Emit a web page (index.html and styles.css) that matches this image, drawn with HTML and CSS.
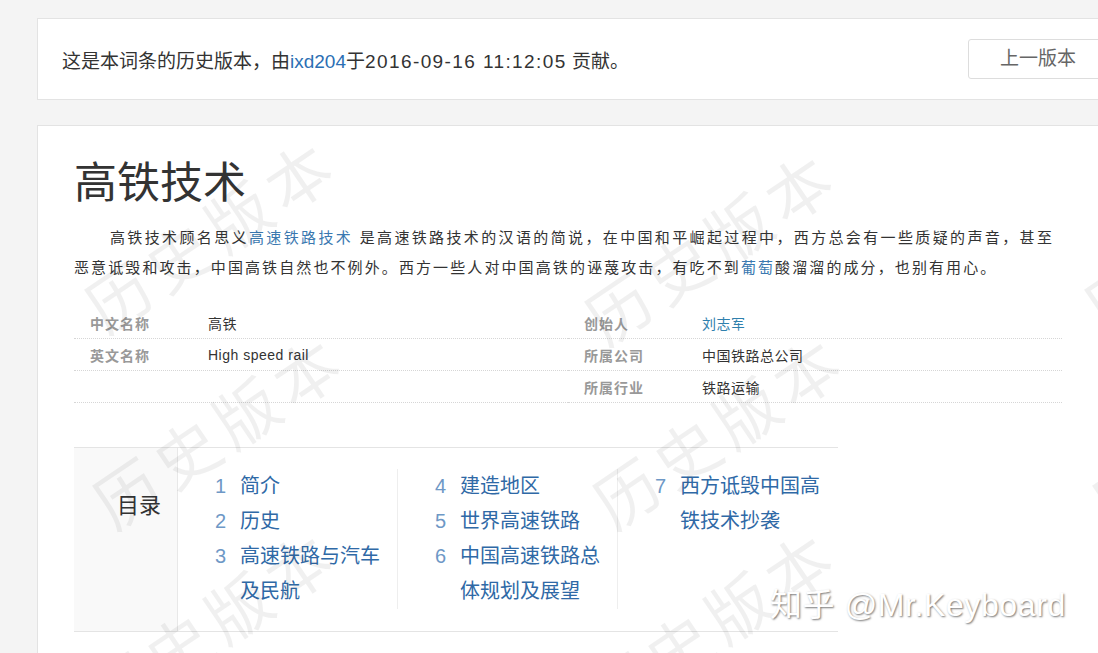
FILE: index.html
```html
<!DOCTYPE html>
<html lang="zh-CN">
<head>
<meta charset="UTF-8">
<title>高铁技术 - 历史版本</title>
<link rel="stylesheet" href="styles.css">
</head>
<body>
<div class="page">

	<div class="notice">
		<p class="notice-text">这是本词条的历史版本，由<a href="#">ixd204</a>于<span class="date">2016-09-16 11:12:05</span> 贡献。</p>
		<a class="btn-prev" href="#">上一版本</a>
	</div>

	<div class="entry">
		<div class="marks">
			<span class="mark m1">历史版本</span>
			<span class="mark m2">历史版本</span>
			<span class="mark m3">历史版本</span>
			<span class="mark m4">历史版本</span>
			<span class="mark m5">历史版本</span>
			<span class="mark m6">历史版本</span>
			<span class="mark m7">历史版本</span>
			<span class="mark m8">历史版本</span>
			<span class="mark m9">历史版本</span>
		</div>

		<div class="content">
			<h1 class="title">高铁技术</h1>
			<p class="summary">高铁技术顾名思义<a href="#">高速铁路技术</a> 是高速铁路技术的汉语的简说，在中国和平崛起过程中，西方总会有一些质疑的声音，甚至恶意诋毁和攻击，中国高铁自然也不例外。西方一些人对中国高铁的诬蔑攻击，有吃不到<a href="#">葡萄</a>酸溜溜的成分，也别有用心。</p>

			<div class="basic">
				<dl class="basic-col">
					<div class="row"><dt>中文名称</dt><dd>高铁</dd></div>
					<div class="row"><dt>英文名称</dt><dd>High speed rail</dd></div>
					<div class="row"><dt></dt><dd></dd></div>
				</dl>
				<dl class="basic-col">
					<div class="row"><dt>创始人</dt><dd><a href="#">刘志军</a></dd></div>
					<div class="row"><dt>所属公司</dt><dd>中国铁路总公司</dd></div>
					<div class="row"><dt>所属行业</dt><dd>铁路运输</dd></div>
				</dl>
			</div>

			<div class="catalog">
				<div class="catalog-head">目录</div>
				<div class="catalog-body">
					<ul class="catalog-col">
						<li><span class="num">1</span><a href="#">简介</a></li>
						<li><span class="num">2</span><a href="#">历史</a></li>
						<li><span class="num">3</span><a href="#">高速铁路与汽车及民航</a></li>
					</ul>
					<ul class="catalog-col">
						<li><span class="num">4</span><a href="#">建造地区</a></li>
						<li><span class="num">5</span><a href="#">世界高速铁路</a></li>
						<li><span class="num">6</span><a href="#">中国高速铁路总体规划及展望</a></li>
					</ul>
					<ul class="catalog-col">
						<li><span class="num">7</span><a href="#">西方诋毁中国高铁技术抄袭</a></li>
					</ul>
				</div>
			</div>
		</div>
	</div>

	<div class="zhihu">知乎 @Mr.Keyboard</div>
</div>
</body>
</html>
```
FILE: styles.css
```css
* {
	margin: 0;
	padding: 0;
	box-sizing: border-box;
}
html, body {
	overflow: hidden;
}
body {
	background: #f4f4f4;
	color: #333;
	font-family: "Liberation Sans", "Noto Sans CJK SC", sans-serif;
}
a {
	text-decoration: none;
}
ul {
	list-style: none;
}
.page {
	position: relative;
	width: 1200px;
	padding: 18px 0 0 37px;
}

/* 顶部提示 */
.notice {
	width: 1090px;
	height: 82px;
	background: #fff;
	border: 1px solid #e3e3e3;
	display: flex;
	align-items: center;
	justify-content: space-between;
	padding: 0 24px;
}
.notice-text {
	font-size: 19px;
	color: #333;
}
.notice-text a {
	color: #2b6fb4;
}
.notice-text .date {
	letter-spacing: 1.4px;
}
.btn-prev {
	display: block;
	width: 134px;
	height: 40px;
	margin-top: -1px;
	border: 1px solid #ddd;
	border-radius: 3px;
	padding-left: 31px;
	font-size: 19px;
	line-height: 38px;
	color: #666;
}

/* 词条 */
.entry {
	position: relative;
	overflow: hidden;
	width: 1090px;
	height: 560px;
	margin-top: 25px;
	background: #fff;
	border: 1px solid #e3e3e3;
	padding: 32px 0 0 36px;
}
.content {
	position: relative;
	width: 988px;
}
.title {
	font-size: 43px;
	line-height: 50px;
	font-weight: normal;
	color: #333;
	margin-bottom: 15px;
}
.summary {
	width: 980px;
	font-size: 15px;
	line-height: 30px;
	letter-spacing: 2.1px;
	text-indent: 36px;
	text-align: justify;
	color: #333;
}
.summary a {
	color: #3a78b0;
}

.basic {
	display: flex;
	margin-top: 24px;
}
.basic-col {
	flex: 1;
}
.basic .row {
	display: flex;
	height: 32px;
	align-items: center;
	border-bottom: 1px dotted #d6d6d6;
	padding-left: 16px;
	font-size: 14px;
}
.basic dt {
	width: 118px;
	color: #999;
	font-weight: bold;
	letter-spacing: 1px;
}
.basic dd {
	color: #333;
	letter-spacing: 0.5px;
}
.basic dd a {
	color: #2f80ad;
}

.catalog {
	display: flex;
	width: 764px;
	margin-top: 44px;
	border-top: 1px solid #e4e4e4;
	border-bottom: 1px solid #e4e4e4;
}
.catalog-head {
	width: 104px;
	background: #f9f9f9;
	border-right: 1px solid #e8e8e8;
	padding: 44px 0 0 43px;
	font-size: 22px;
	line-height: 28px;
	color: #333;
}
.catalog-body {
	display: flex;
	padding: 21px 0 22px;
}
.catalog-col {
	width: 220px;
	padding: 0 8px 0 37px;
	border-right: 1px solid #eee;
}
.catalog-col:last-child {
	border-right: none;
}
.catalog-col li {
	display: flex;
	font-size: 20px;
	line-height: 35px;
}
.catalog-col .num {
	width: 25px;
	flex: none;
	color: #6e98c6;
}
.catalog-col a {
	color: #2f69a6;
}

/* 水印 */
.marks {
	position: absolute;
	left: 0;
	top: 0;
	width: 100%;
	height: 100%;
	pointer-events: none;
	z-index: 2;
}
.mark {
	position: absolute;
	font-size: 64px;
	letter-spacing: 8px;
	white-space: nowrap;
	color: rgba(0, 0, 0, 0.06);
	transform: translate(-50%, -50%) rotate(-34deg);
}
.m1 { left: 172px; top: 106px; }
.m2 { left: 672px; top: 118px; }
.m3 { left: 1172px; top: 106px; }
.m4 { left: 180px; top: 302px; }
.m5 { left: 680px; top: 302px; }
.m6 { left: 1180px; top: 302px; }
.m7 { left: 172px; top: 497px; }
.m8 { left: 672px; top: 497px; }
.m9 { left: 1172px; top: 497px; }

.zhihu {
	position: absolute;
	left: 770px;
	top: 579px;
	font-size: 32px;
	letter-spacing: 0.6px;
	color: #fff;
	text-shadow: 1px 1px 2px #777;
	white-space: nowrap;
	z-index: 3;
}
```
